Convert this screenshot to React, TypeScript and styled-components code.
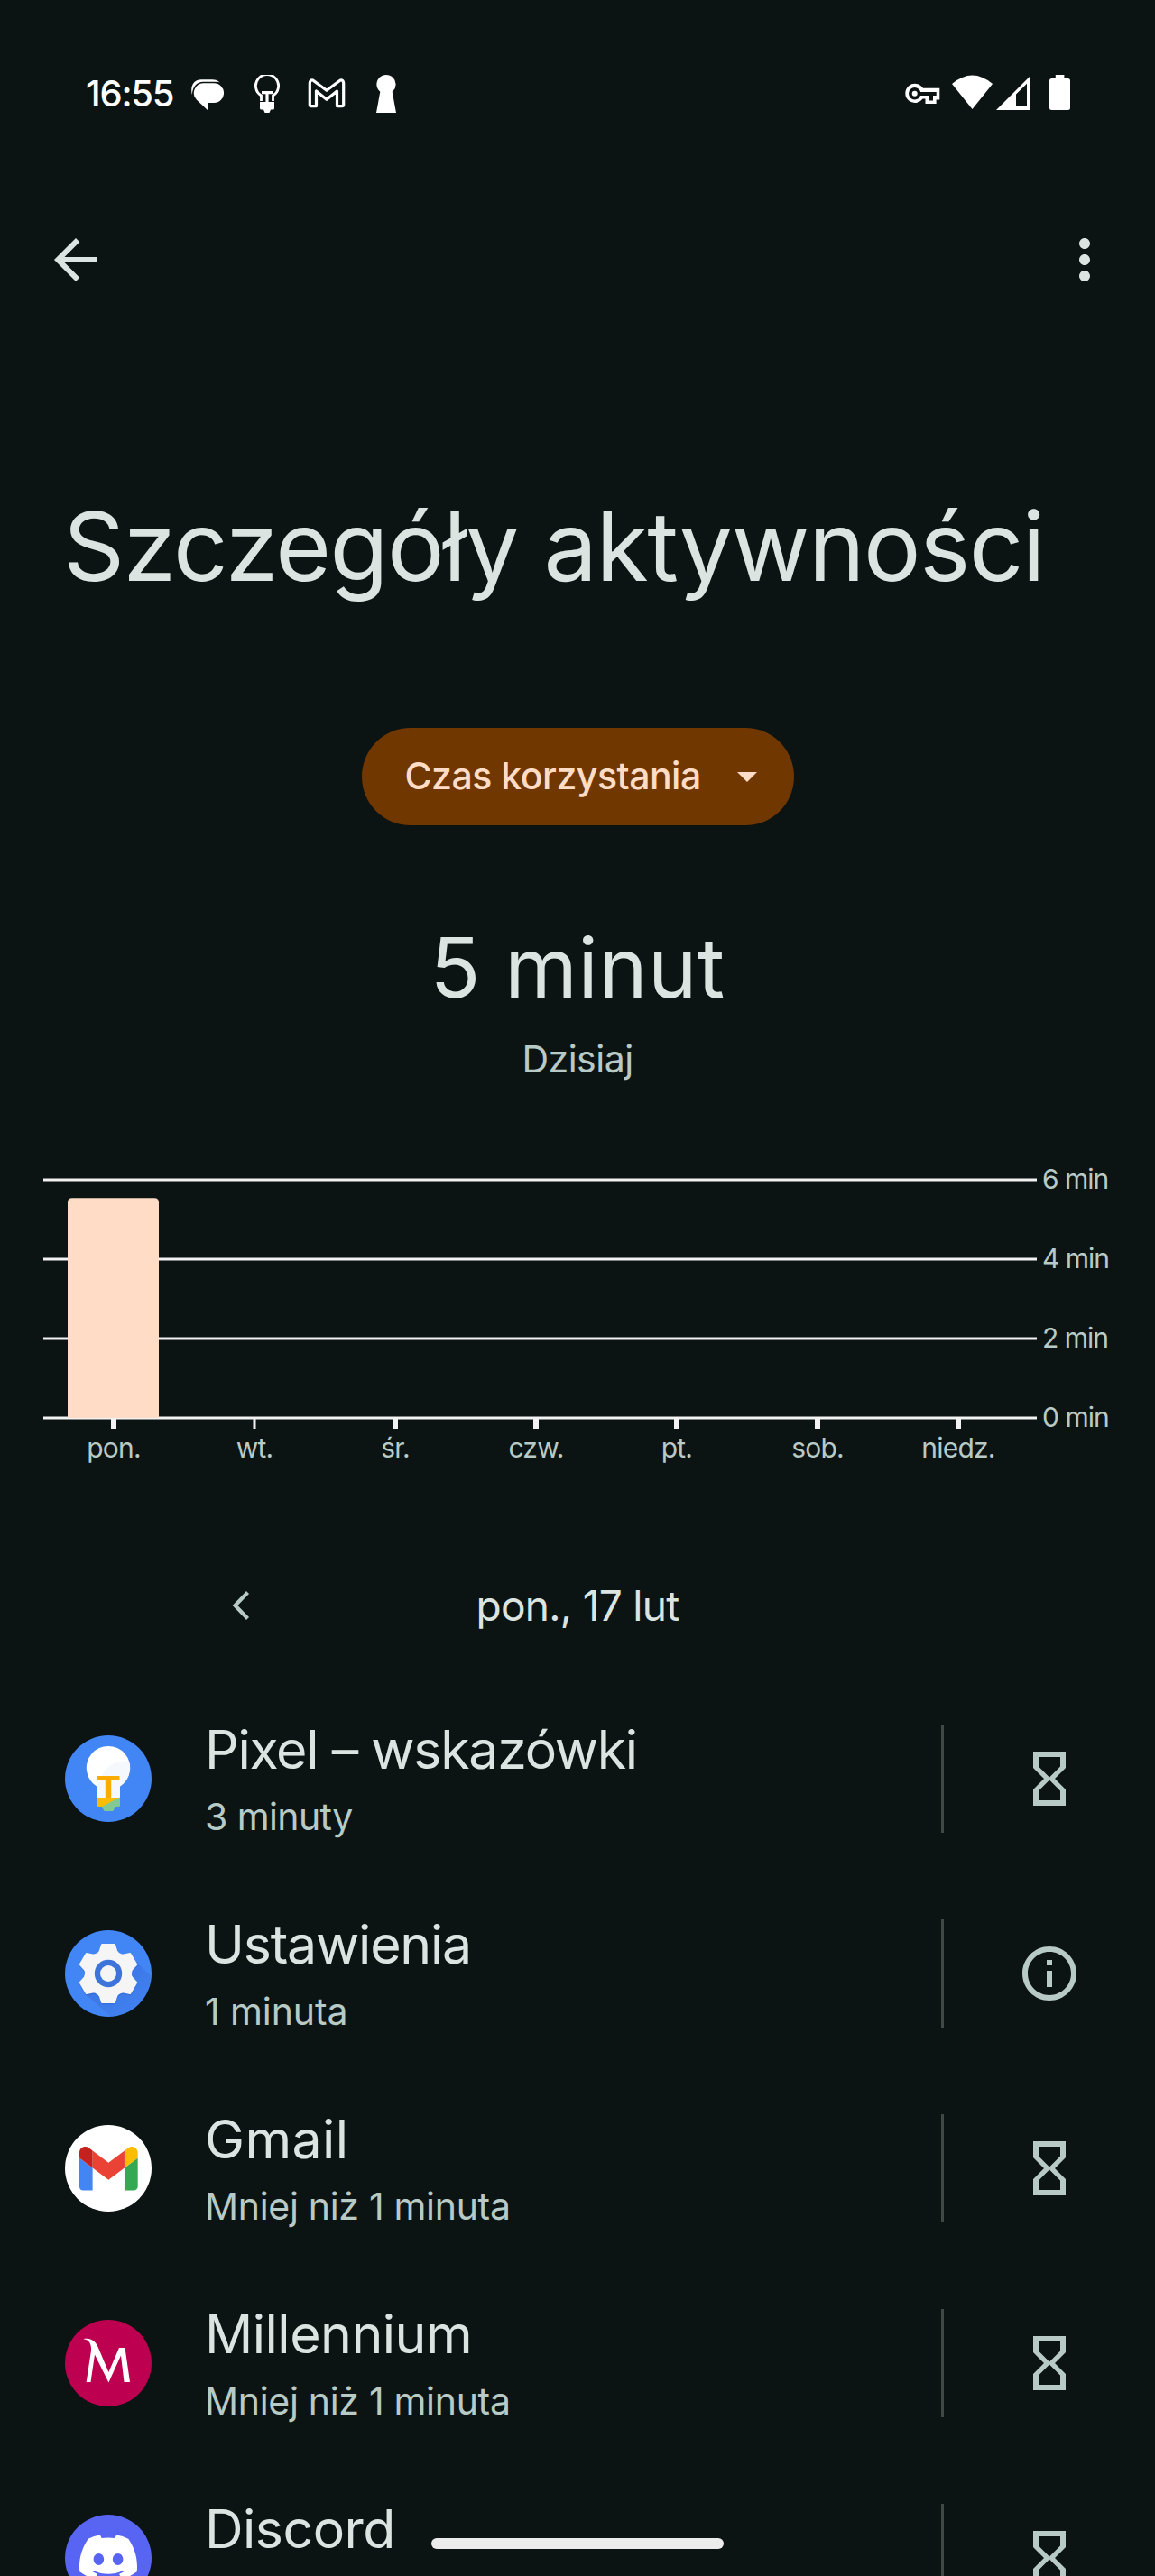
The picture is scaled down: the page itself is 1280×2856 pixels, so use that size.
import React from "react";
import styled, { createGlobalStyle } from "styled-components";
import { SiDiscord } from "react-icons/si";

const color = {
  bg: "#0c1413",
  text: "#dce4e1",
  muted: "#b8cac6",
  pill: "#703700",
  peach: "#ffdcc6",
  grid: "#f2f2f2",
  divider: "#414947",
};

const GlobalStyle = createGlobalStyle`
  *, *::before, *::after { box-sizing: border-box; }
  body { margin: 0; background: ${color.bg}; }
`;

const Screen = styled.main`
  position: relative;
  display: flex;
  flex-direction: column;
  width: 1280px;
  height: 2856px;
  overflow: hidden;
  background: ${color.bg};
  color: ${color.text};
  font-family: Inter, Roboto, sans-serif;
  white-space: nowrap;

  > * { flex-shrink: 0; }
  svg { display: block; flex: none; }
`;

/* ---------- status bar ---------- */

const StatusBar = styled.header`
  display: flex;
  align-items: center;
  height: 204px;
  padding: 4px 94px 0 95px;
  color: #fff;
`;

const Clock = styled.span`
  width: 117px;
  font-size: 40px;
  font-weight: 500;
  line-height: 48px;
  letter-spacing: -1.2px;
`;

const StatusIcon = styled.span<{ $gap?: number }>`
  margin-left: ${(p) => p.$gap ?? 0}px;
`;

const Spacer = styled.span`
  flex: 1;
`;

const ChatIcon = () => (
  <svg width="36" height="42" viewBox="0 -4 36 42" fill="#fff">
    <path d="M.8 18C-1.6 7.5 3.5 1.2 11 1.2h12c4 0 6.800 1.200 8.600 3.300C29.500 3.900 27.500 3.800 25 3.800H13C6.500 3.900 1.600 8.500.8 18z" />
    <path d="M13.200 5.300h12a10.850 10.850 0 0 1 0 21.700H19v9L6 23.800A10.850 10.850 0 0 1 13.200 5.300z" />
  </svg>
);

const BulbOutlineIcon = () => (
  <svg width="30" height="42" viewBox="0 1 30 42">
    <path d="M8.500 30v-6a12.600 12.600 0 1 1 13 0v6" fill="none" stroke="#fff" strokeWidth="2.800" />
    <path d="M9 19h12v3.200h-4.400V31h-3.200v-8.800H9z" fill="#fff" />
    <path d="M7 31h16v7q0 1.500-1.500 1.500H19L17.500 43h-5L11 39.500H8.500Q7 39.500 7 38z" fill="#fff" />
  </svg>
);

const GmailOutlineIcon = () => (
  <svg width="42" height="42" viewBox="0 -3 42 42">
    <path
      d="M2.300 6.500Q2.300 2.500 5.800 3L21 14.300 36.200 3q3.500-.5 3.500 3.500V30q0 1.600-1.600 1.600h-5.600V15L21 24.300 9.500 15v16.600H3.900Q2.300 31.600 2.300 30z"
      fill="none"
      stroke="#fff"
      strokeWidth="3.200"
      strokeLinejoin="round"
    />
  </svg>
);

const KeyholeIcon = () => (
  <svg width="22" height="42" viewBox="0 0 22 42" fill="#fff">
    <circle cx="11" cy="10.600" r="10.600" />
    <path d="M5 15h12l5 27H0z" />
  </svg>
);

const KeyIcon = () => (
  <svg width="39" height="42" viewBox="0 -10 39 42">
    <path d="M19.900 4.800H38.300v12.700H34.600V22H22.500v-5.500h-2.900A10.600 10.600 0 1 1 19.900 4.800z" fill="#fff" />
    <circle cx="10.700" cy="10.700" r="6.700" fill={color.bg} />
    <path d="M15 9h19.700v4H31v5.500h-4V13H15z" fill={color.bg} />
    <circle cx="10.700" cy="10.700" r="3" fill="#fff" />
  </svg>
);

const WifiIcon = () => (
  <svg width="45" height="42" viewBox="0 0 45 42">
    <path d="M0 10Q22.500-9 45 10L22.500 38z" fill="#fff" />
  </svg>
);

const SignalIcon = () => (
  <svg width="38" height="42" viewBox="0 -1 38 42">
    <path d="M0 38L38 0v38zM22 34h12V8.800L22 20.600z" fill="#fff" fillRule="evenodd" />
  </svg>
);

const BatteryIcon = () => (
  <svg width="23" height="42" viewBox="0 0 23 42" fill="#fff">
    <rect x="6.800" y="0" width="9.600" height="6" />
    <rect x="0" y="4" width="23" height="35" rx="2.500" />
  </svg>
);

/* ---------- app bar and title ---------- */

const AppBar = styled.nav`
  display: flex;
  align-items: center;
  justify-content: space-between;
  height: 168px;
  padding: 0 42px 0 48px;
`;

const Title = styled.h1`
  margin: 174px 0 0;
  padding-left: 70px;
  font-size: 106px;
  font-weight: 400;
  line-height: 120px;
  letter-spacing: -1.45px;
`;

/* ---------- filter pill and summary ---------- */

const Pill = styled.button`
  display: flex;
  align-items: center;
  justify-content: space-between;
  align-self: center;
  width: 479px;
  height: 108px;
  margin: 141px 0 0;
  padding: 0 41px 0 48px;
  border: 0;
  border-radius: 54px;
  background: ${color.pill};
  color: ${color.peach};
  font: 500 41px/50px Inter, Roboto, sans-serif;
  letter-spacing: -0.5px;
`;

const PillLabel = styled.span`
  padding-bottom: 2px;
`;

const Total = styled.div`
  margin-top: 103px;
  text-align: center;
  font-size: 92px;
  line-height: 110px;
  letter-spacing: 0.5px;
`;

const Period = styled.div`
  margin-top: 16px;
  text-align: center;
  color: ${color.muted};
  font-size: 41px;
  line-height: 60px;
  letter-spacing: -0.5px;
`;

/* ---------- chart ---------- */

const Chart = styled.section`
  display: flex;
  margin-top: 59px;
  padding-left: 48px;
  color: ${color.muted};
  font-size: 30px;
`;

const Plot = styled.div`
  display: flex;
  flex-direction: column;
  width: 1101px;
`;

const Days = styled.div`
  display: grid;
  grid-template-columns: repeat(7, 156px);
  line-height: 40px;
  letter-spacing: -0.8px;
  text-align: center;
`;

const Scale = styled.div`
  display: flex;
  flex-direction: column;
  margin-left: 6px;
  height: 362px;
  line-height: 88px;
  letter-spacing: -1px;
`;

const days = ["pon.", "wt.", "śr.", "czw.", "pt.", "sob.", "niedz."];
const minutes = [5.54, 0, 0, 0, 0, 0, 0];
const scale = [6, 4, 2, 0];
const baseY = 309;
const perMinute = 44;

const ChartDrawing = () => (
  <svg width="1101" height="322" viewBox="0 0 1101 322">
    {scale.map((v) => (
      <rect key={v} x="0" y={baseY - v * perMinute - 1.5} width="1101" height="3" fill={color.grid} />
    ))}
    {days.map((d, i) => (
      <rect key={d} x={78 + i * 156 - (i === 1 ? 1.5 : 3)} y={baseY} width={i === 1 ? 3 : 6} height="12" fill={color.grid} />
    ))}
    {minutes.map((m, i) => {
      if (!m) return null;
      const top = baseY - m * perMinute;
      const left = 27 + i * 156;
      return (
        <path
          key={days[i]}
          d={`M${left} ${baseY}V${top + 5}q0-5 5-5h91q5 0 5 5V${baseY}z`}
          fill={color.peach}
        />
      );
    })}
  </svg>
);

/* ---------- date switcher ---------- */

const DateSwitcher = styled.div`
  display: grid;
  grid-template-columns: 72px 1fr 72px;
  align-items: center;
  justify-items: center;
  height: 72px;
  margin-top: 119px;
  padding: 0 231px;
`;

const DateLabel = styled.span`
  font-size: 46px;
  line-height: 72px;
  letter-spacing: -0.7px;
`;

/* ---------- app list ---------- */

const List = styled.ul`
  display: flex;
  flex-direction: column;
  margin: 48px 0 0;
  padding: 0;
  list-style: none;
`;

const Row = styled.li`
  display: flex;
  align-items: center;
  height: 216px;
  padding-left: 72px;
`;

const RowText = styled.div`
  display: flex;
  flex: 1;
  flex-direction: column;
  gap: 8px;
  padding: 4px 0 0 59px;
`;

const AppName = styled.span<{ $tracking: number }>`
  font-size: 59px;
  line-height: 72px;
  letter-spacing: ${(p) => p.$tracking}px;
`;

const Usage = styled.span<{ $tracking: number }>`
  color: ${color.muted};
  font-size: 41px;
  line-height: 60px;
  letter-spacing: ${(p) => p.$tracking}px;
`;

const Divider = styled.span`
  width: 3px;
  height: 120px;
  background: ${color.divider};
`;

const Action = styled.span`
  display: flex;
  justify-content: center;
  width: 234px;
`;

const Handle = styled.div`
  position: absolute;
  left: 478px;
  top: 2814px;
  width: 324px;
  height: 12px;
  border-radius: 6px;
  background: #ececec;
`;

const Glyph = ({ d, fill }: { d: string; fill: string }) => (
  <svg width="72" height="72" viewBox="0 0 24 24" fill={fill}>
    <path d={d} />
  </svg>
);

const glyphs = {
  back: "M20 11H7.83l5.59-5.59L12 4l-8 8 8 8 1.41-1.41L7.83 13H20v-2z",
  more: "M12 8c1.100 0 2-.9 2-2s-.9-2-2-2-2 .9-2 2 .9 2 2 2zm0 2c-1.100 0-2 .9-2 2s.9 2 2 2 2-.9 2-2-.9-2-2-2zm0 6c-1.100 0-2 .9-2 2s.9 2 2 2 2-.9 2-2-.9-2-2-2z",
  timer: "M6 2v6l4 4-4 4v6h12v-6l-4-4 4-4V2H6zm10 14.500V20H8v-3.500l4-4 4 4zm-4-5l-4-4V4h8v3.500l-4 4z",
  info: "M11 7h2v2h-2zm0 4h2v6h-2zm1-9C6.480 2 2 6.480 2 12s4.480 10 10 10 10-4.480 10-10S17.520 2 12 2zm0 18c-4.410 0-8-3.590-8-8s3.590-8 8-8 8 3.590 8 8-3.590 8-8 8z",
};

const Badge = ({ fill, children }: { fill: string; children: React.ReactNode }) => (
  <svg width="96" height="96" viewBox="0 0 96 96">
    <circle cx="48" cy="48" r="48" fill={fill} />
    {children}
  </svg>
);

const TipsLogo = () => (
  <Badge fill="#4285f4">
    <path d="M35 69V56.500a24.200 24.200 0 1 1 26 0V69z" fill="#fff" />
    <path d="M39 49C43 36 55 27 70.500 28.500c4 9-.5 22-9.500 28V69H35V56z" fill="#f5f8fd" />
    <path d="M36 45h24.500v4.200h-9.300V70h-6.400V49.200H36z" fill="#f9ab00" />
    <path d="M35 69h26v8q0 2-2 2H37q-2 0-2-2z" fill="#fbbc04" />
    <path d="M61 68.500V77q0 2-2 2h-3.500l-1.500 4q-.4 1-1.500 1h-8q-1.100 0-1.500-1l-2-4z" fill="#81c995" />
  </Badge>
);

const gearPath =
  Array.from({ length: 6 }, (_, k) => {
    const a = (k * Math.PI) / 3;
    const at = (x: number, y: number) =>
      `${(48 + x * Math.cos(a) - y * Math.sin(a)).toFixed(2)} ${(48 + x * Math.sin(a) + y * Math.cos(a)).toFixed(2)}`;
    return `${k ? "L" : "M"}${at(-9.200, -25)}L${at(-7, -32)}L${at(7, -32)}L${at(9.200, -25)}Q${at(10.200, -22.500)} ${at(14.500, -20.500)}`;
  }).join("") + "Z";

const SettingsLogo = () => (
  <Badge fill="#4285f4">
    <defs>
      <linearGradient id="gearShade" x1="0.2" y1="0.2" x2="0.9" y2="0.9">
        <stop offset="0" stopColor="#3367d6" stopOpacity="0.6" />
        <stop offset="1" stopColor="#3f7ae6" stopOpacity="0.35" />
      </linearGradient>
    </defs>
    <path d="M79 35L95.300 51A48 48 0 0 1 51 95.900L22 70z" fill="url(#gearShade)" />
    <path d={gearPath} transform="translate(0 1.500)" fill="#2f5fc4" stroke="#2f5fc4" strokeWidth="2" strokeLinejoin="round" opacity="0.35" />
    <path d={gearPath} fill="#f5f5f5" stroke="#f5f5f5" strokeWidth="2" strokeLinejoin="round" />
    <circle cx="48" cy="48" r="15.200" fill="#3d74da" />
    <circle cx="48" cy="48" r="9" fill="#f5f5f5" />
  </Badge>
);

const GmailLogo = () => (
  <Badge fill="#fff">
    <g transform="translate(15.900 24) scale(.736) translate(-52 -42)">
      <path fill="#4285f4" d="M58 108h14V74L52 59v43c0 3.320 2.690 6 6 6" />
      <path fill="#34a853" d="M120 108h14c3.320 0 6-2.690 6-6V59l-20 15" />
      <path fill="#fbbc04" d="M120 48v26l20-15v-8c0-7.420-8.470-11.650-14.400-7.200" />
      <path fill="#ea4335" d="M72 74V48l24 18 24-18v26L96 92" />
      <path fill="#c5221f" d="M52 51v8l20 15V48l-5.600-4.200c-5.940-4.450-14.400-.22-14.400 7.200" />
    </g>
  </Badge>
);

const MillenniumLogo = () => (
  <Badge fill="#bd004f">
    <path
      d="M20.300 21.200C29 19.500 34 24 37 31L48.400 58 60 31h6.500L72 69h-6.500L62 39.500 48.400 69.500 33 38.500 28.500 69h-4.800L29 34C29.500 27 27 22 20.300 21.200z"
      fill="#fff"
    />
  </Badge>
);

const DiscordLogo = () => (
  <Badge fill="#5865f2">
    <SiDiscord x="16" y="15" size={64} color="#fff" />
  </Badge>
);

type AppEntry = {
  name: string;
  usage: string;
  logo: React.ReactNode;
  action: "timer" | "info";
  tracking: [number, number];
};

const apps: AppEntry[] = [
  { name: "Pixel – wskazówki", usage: "3 minuty", logo: <TipsLogo />, action: "timer", tracking: [-1.25, -0.6] },
  { name: "Ustawienia", usage: "1 minuta", logo: <SettingsLogo />, action: "info", tracking: [-1.2, -0.1] },
  { name: "Gmail", usage: "Mniej niż 1 minuta", logo: <GmailLogo />, action: "timer", tracking: [0.4, -0.3] },
  { name: "Millennium", usage: "Mniej niż 1 minuta", logo: <MillenniumLogo />, action: "timer", tracking: [-0.5, -0.3] },
  { name: "Discord", usage: "Mniej niż 1 minuta", logo: <DiscordLogo />, action: "timer", tracking: [-0.5, -0.3] },
];

export default function App() {
  return (
    <Screen>
      <GlobalStyle />
      <StatusBar>
        <Clock>16:55</Clock>
        <StatusIcon><ChatIcon /></StatusIcon>
        <StatusIcon $gap={33}><BulbOutlineIcon /></StatusIcon>
        <StatusIcon $gap={30}><GmailOutlineIcon /></StatusIcon>
        <StatusIcon $gap={34}><KeyholeIcon /></StatusIcon>
        <Spacer />
        <StatusIcon><KeyIcon /></StatusIcon>
        <StatusIcon $gap={13}><WifiIcon /></StatusIcon>
        <StatusIcon $gap={4}><SignalIcon /></StatusIcon>
        <StatusIcon $gap={21}><BatteryIcon /></StatusIcon>
      </StatusBar>

      <AppBar>
        <Glyph d={glyphs.back} fill={color.text} />
        <Glyph d={glyphs.more} fill={color.text} />
      </AppBar>

      <Title>Szczegóły aktywności</Title>

      <Pill>
        <PillLabel>Czas korzystania</PillLabel>
        <svg width="22" height="11" viewBox="0 0 22 11"><path d="M0 0h22L11 11z" fill={color.peach} /></svg>
      </Pill>

      <Total>5 minut</Total>
      <Period>Dzisiaj</Period>

      <Chart>
        <Plot>
          <ChartDrawing />
          <Days>{days.map((d) => <span key={d}>{d}</span>)}</Days>
        </Plot>
        <Scale>{scale.map((v) => <span key={v}>{v} min</span>)}</Scale>
      </Chart>

      <DateSwitcher>
        <svg width="20" height="34" viewBox="0 -1 20 34">
          <path d="M17.500 1.500L3.500 16l14 14.500" fill="none" stroke={color.muted} strokeWidth="4.200" />
        </svg>
        <DateLabel>pon., 17 lut</DateLabel>
      </DateSwitcher>

      <List>
        {apps.map((app) => (
          <Row key={app.name}>
            {app.logo}
            <RowText>
              <AppName $tracking={app.tracking[0]}>{app.name}</AppName>
              <Usage $tracking={app.tracking[1]}>{app.usage}</Usage>
            </RowText>
            <Divider />
            <Action><Glyph d={glyphs[app.action]} fill={color.muted} /></Action>
          </Row>
        ))}
      </List>

      <Handle />
    </Screen>
  );
}
